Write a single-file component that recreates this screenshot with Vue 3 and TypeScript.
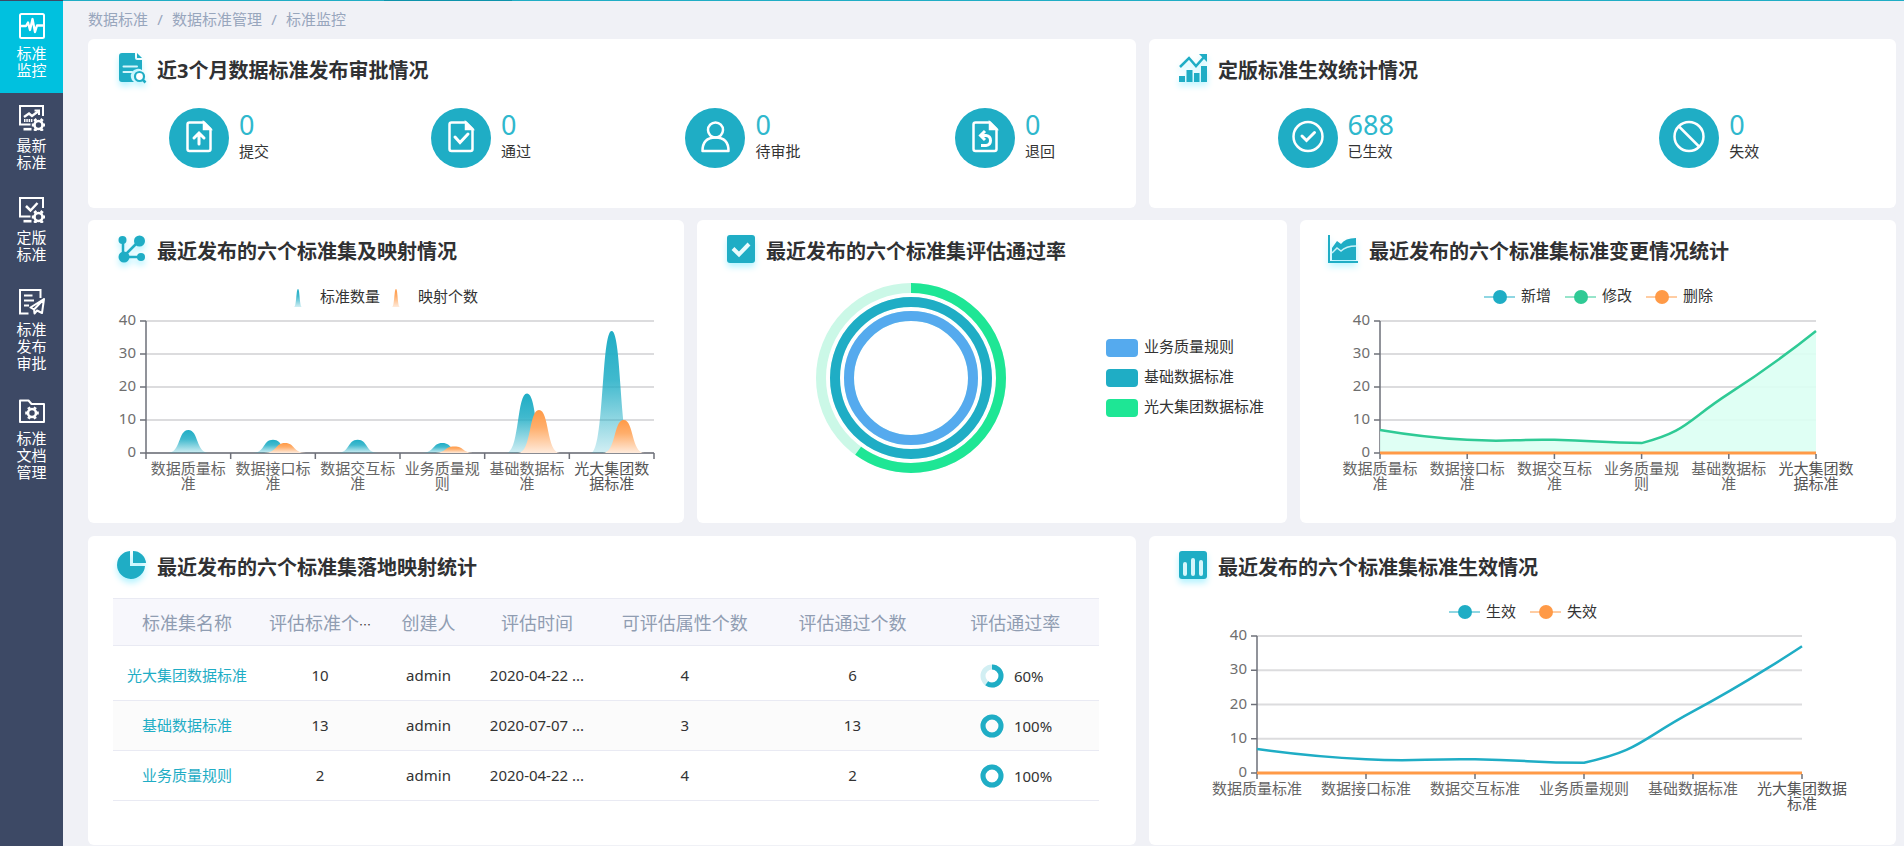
<script setup lang="ts">
interface MenuItem {
  icon: string
  lines: string[]
  active?: boolean
}
interface Stat {
  icon: string
  value: number
  label: string
}
interface Point {
  x: number
  y: number
}
interface Plot {
  left: number
  right: number
  top: number
  bottom: number
}

const TEAL = '#1fadc5'
const GREEN = '#2fca95'
const ORANGE = '#ff9a47'

const menu: MenuItem[] = [
  { icon: 'monitor', lines: ['标准', '监控'], active: true },
  { icon: 'latest', lines: ['最新', '标准'] },
  { icon: 'fixed', lines: ['定版', '标准'] },
  { icon: 'publish', lines: ['标准', '发布', '审批'] },
  { icon: 'docs', lines: ['标准', '文档', '管理'] },
]

const approvalStats: Stat[] = [
  { icon: 'submit', value: 0, label: '提交' },
  { icon: 'pass', value: 0, label: '通过' },
  { icon: 'pending', value: 0, label: '待审批' },
  { icon: 'reject', value: 0, label: '退回' },
]
const effectStats: Stat[] = [
  { icon: 'effective', value: 688, label: '已生效' },
  { icon: 'invalid', value: 0, label: '失效' },
]

const ticks = [0, 10, 20, 30, 40]
const counts = [7, 4, 4, 3, 18, 37]
const mappings = [0, 3, 0, 2, 13, 10]
const shortNames = [
  ['数据质量标', '准'],
  ['数据接口标', '准'],
  ['数据交互标', '准'],
  ['业务质量规', '则'],
  ['基础数据标', '准'],
  ['光大集团数', '据标准'],
]
const wideNames = [
  ['数据质量标准'],
  ['数据接口标准'],
  ['数据交互标准'],
  ['业务质量规则'],
  ['基础数据标准'],
  ['光大集团数据', '标准'],
]

const barPlot: Plot = { left: 58, right: 566, top: 57, bottom: 189 }
const changePlot: Plot = { left: 80, right: 516, top: 57, bottom: 189 }
const effectPlot: Plot = { left: 108, right: 653, top: 56, bottom: 193 }

function yOf(plot: Plot, value: number): number {
  return plot.bottom - ((plot.bottom - plot.top) * value) / 40
}
function lineX(plot: Plot, i: number): number {
  return plot.left + ((plot.right - plot.left) * i) / (counts.length - 1)
}
function bandX(i: number): number {
  return barPlot.left + ((barPlot.right - barPlot.left) * i) / counts.length
}
function bandCenter(i: number): number {
  return (bandX(i) + bandX(i + 1)) / 2
}

/** Bell-shaped bar standing on the axis. */
function bell(cx: number, base: number, top: number, half: number): string {
  const shoulder = half * 0.5
  const waist = half * 0.35
  return [
    `M${cx - half},${base}`,
    `C${cx - waist},${base} ${cx - shoulder},${top} ${cx},${top}`,
    `C${cx + shoulder},${top} ${cx + waist},${base} ${cx + half},${base}Z`,
  ].join(' ')
}
function bar(i: number, value: number, offset: number): string {
  return bell(bandCenter(i) + offset, barPlot.bottom, yOf(barPlot, value), 21)
}

/** Smooth curve whose control points stay inside the data's value range. */
function smoothPath(plot: Plot, values: number[]): string {
  const pts: Point[] = values.map((v, i) => ({ x: lineX(plot, i), y: yOf(plot, v) }))
  const minY = Math.min(...pts.map((p) => p.y))
  const maxY = Math.max(...pts.map((p) => p.y))
  const clamp = (y: number) => Math.max(minY, Math.min(maxY, y))
  let path = `M${pts[0].x},${pts[0].y}`
  let from: Point = pts[0]
  for (let i = 1; i < pts.length; i++) {
    const p = pts[i]
    const prev = pts[i - 1]
    const next = pts[i + 1]
    if (!next) {
      path += ` C${from.x},${from.y} ${p.x},${p.y} ${p.x},${p.y}`
      break
    }
    const lenPrev = Math.hypot(p.x - prev.x, p.y - prev.y)
    const lenNext = Math.hypot(next.x - p.x, next.y - p.y)
    const ratio = lenNext / (lenNext + lenPrev)
    const vx = next.x - prev.x
    const vy = next.y - prev.y
    const before: Point = { x: p.x - vx * 0.5 * (1 - ratio), y: clamp(p.y - vy * 0.5 * (1 - ratio)) }
    path += ` C${from.x},${from.y} ${before.x},${before.y} ${p.x},${p.y}`
    from = { x: p.x + vx * 0.5 * ratio, y: clamp(p.y + vy * 0.5 * ratio) }
  }
  return path
}
const changeLine = smoothPath(changePlot, counts)
const changeArea = `${changeLine} L${changePlot.right},${changePlot.bottom} L${changePlot.left},${changePlot.bottom}Z`
const effectLine = smoothPath(effectPlot, counts)

const rings = [
  { r: 62, color: '#55aaee', percent: 100, name: '业务质量规则' },
  { r: 76, color: TEAL, percent: 100, name: '基础数据标准' },
  { r: 90, color: '#1ee695', percent: 60, name: '光大集团数据标准' },
]

const columns = ['标准集名称', '评估标准个', '创建人', '评估时间', '可评估属性个数', '评估通过个数', '评估通过率']
const rows = [
  { name: '光大集团数据标准', total: 10, owner: 'admin', time: '2020-04-22 ...', attrs: 4, passed: 6, rate: 60 },
  { name: '基础数据标准', total: 13, owner: 'admin', time: '2020-07-07 ...', attrs: 3, passed: 13, rate: 100 },
  { name: '业务质量规则', total: 2, owner: 'admin', time: '2020-04-22 ...', attrs: 4, passed: 2, rate: 100 },
]
</script>

<template>
  <div class="app">
    <nav class="sidebar">
      <a v-for="item in menu" :key="item.icon" href="#" class="menu-item" :class="{ active: item.active }">
        <svg class="menu-icon" viewBox="0 0 26 26" fill="none" stroke="#fff" stroke-width="2">
          <template v-if="item.icon === 'monitor'">
            <rect x="1" y="1" width="24" height="24" rx="1.5" />
            <path d="M1 13H7L9 9.500L11 17L13.500 6L16 19L18 12.500H25" stroke-width="2.300" stroke-linejoin="round" />
          </template>
          <template v-else-if="item.icon === 'latest' || item.icon === 'fixed'">
            <path d="M24 11V1H1V19.500H11.500" />
            <path d="M4.500 24.200H12.500" stroke-width="2.600" />
            <template v-if="item.icon === 'latest'">
              <path d="M5 12L10 8.500L13 11L19 6.500" stroke-width="2.300" />
              <path d="M15.500 5.500H20V10" />
              <path d="M5 15.500H13.500" stroke-width="3" stroke-dasharray="1.500 .8" />
            </template>
            <path v-else d="M7 9L11.500 13.500L18.500 6" stroke-width="2.500" />
            <circle cx="19.500" cy="20" r="4" stroke-width="2.600" />
            <path
              d="M22 16L23.500 14M24 20H26.500M22 24L23.500 26M17 24L15.500 26M15 20H12.800M17 16L15.500 14"
              stroke-width="3"
            />
          </template>
          <template v-else-if="item.icon === 'publish'">
            <path d="M21.500 9V1H1V24.500H9.500" />
            <path d="M5 6.500H13.500M5 11.500H15M5 16.500H10" />
            <path
              d="M25 10L11.500 18.500L15 20.500L15.500 24.500L18 21.500L23 24L25 10L15 20.500"
              stroke-width="2"
              stroke-linejoin="round"
            />
          </template>
          <template v-else>
            <path d="M1 2.500H9.500L12.500 6H25V24H1Z" stroke-linejoin="round" />
            <circle cx="13" cy="15" r="4" stroke-width="2.600" />
            <path
              d="M15.500 11L16.500 9.300M17.500 15H19.800M15.500 19L16.500 20.700M10.500 19L9.500 20.700M8.500 15H6.200M10.500 11L9.500 9.300"
              stroke-width="3"
            />
          </template>
        </svg>
        <span v-for="line in item.lines" :key="line" class="menu-line">{{ line }}</span>
      </a>
    </nav>

    <div class="page">
      <div class="loading"><span class="loading-bar"></span></div>
      <main class="main">
        <nav class="breadcrumb" aria-label="位置">
          <a href="#">数据标准</a><span>/</span><a href="#">数据标准管理</a><span>/</span><a href="#">标准监控</a>
        </nav>

        <div class="row row-two first">
          <section class="card">
            <h2 class="title">
              <svg class="title-icon" viewBox="0 0 28 30">
                <path d="M4 0H17V5Q17 7 19 7H24V17A7 7 0 0 0 16 29H4Q1 29 1 26V3Q1 0 4 0Z" :fill="TEAL" />
                <path d="M19 0L24 5H19Z" :fill="TEAL" />
                <path d="M5.500 13.500H19M5.500 19H14" stroke="#d5f6fb" stroke-width="2" stroke-linecap="round" />
                <circle cx="21.500" cy="23.500" r="4.500" fill="#fff" :stroke="TEAL" stroke-width="2.200" />
                <path d="M24.500 26.500L27.500 29.500" :stroke="TEAL" stroke-width="2.500" />
              </svg>
              近3个月数据标准发布审批情况
            </h2>
            <div class="stats four">
              <div v-for="s in approvalStats" :key="s.label" class="stat">
                <svg class="stat-icon" viewBox="0 0 60 60" fill="none" stroke="#fff" stroke-width="2.500">
                  <circle cx="30" cy="30" r="30" :fill="TEAL" stroke="none" />
                  <template v-if="s.icon === 'pending'">
                    <circle cx="30.500" cy="22" r="7.500" />
                    <path d="M17.500 43Q17.500 29.500 30.500 29.500Q43.500 29.500 43.500 43Z" stroke-linejoin="round" />
                  </template>
                  <template v-else>
                    <path d="M35 14.500H20.500Q18.500 14.500 18.500 16.500V41Q18.500 43 20.500 43H39.500Q41.500 43 41.500 41V21L35 14.500Z" />
                    <path d="M35 15V21H41Z" fill="#fff" />
                    <path
                      v-if="s.icon === 'submit'"
                      d="M30 36V26M25 30L30 25L35 30"
                      stroke-width="3"
                      stroke-linecap="round"
                    />
                    <path v-else-if="s.icon === 'pass'" d="M24 29L29 34.500L37 26" stroke-width="3" stroke-linecap="round" />
                    <path
                      v-else
                      d="M30 23L25.500 27.500L30 32M26 27.500H31Q35.500 28 35.500 32.500Q35.500 37 31 37.500H26"
                      stroke-width="3"
                    />
                  </template>
                </svg>
                <div class="stat-text">
                  <span class="stat-value">{{ s.value }}</span>
                  <span class="stat-label">{{ s.label }}</span>
                </div>
              </div>
            </div>
          </section>

          <section class="card">
            <h2 class="title">
              <svg class="title-icon" viewBox="0 0 28 30" fill="none">
                <path d="M1 14L10 5L17 13L26 3" :stroke="TEAL" stroke-width="2.500" />
                <path d="M20 1H28V9Z" :fill="TEAL" />
                <path d="M0 23H6V29H0ZM7.500 17H13.500V29H7.500ZM15 20H20.500V29H15ZM22 13H28V29H22Z" :fill="TEAL" />
              </svg>
              定版标准生效统计情况
            </h2>
            <div class="stats two">
              <div v-for="s in effectStats" :key="s.label" class="stat">
                <svg class="stat-icon" viewBox="0 0 60 60" fill="none" stroke="#fff" stroke-width="2.500">
                  <circle cx="30" cy="30" r="30" :fill="TEAL" stroke="none" />
                  <circle cx="30" cy="28.500" r="14.500" />
                  <path v-if="s.icon === 'effective'" d="M24 28L28.500 32.500L36.500 24.500" stroke-width="3" stroke-linecap="round" />
                  <path v-else d="M20 18.500L40 38.500" />
                </svg>
                <div class="stat-text">
                  <span class="stat-value">{{ s.value }}</span>
                  <span class="stat-label">{{ s.label }}</span>
                </div>
              </div>
            </div>
          </section>
        </div>

        <div class="row row-three">
          <section class="card">
            <h2 class="title">
              <svg class="title-icon" viewBox="0 0 28 30" fill="none">
                <path d="M5 6V23H24M5 23L22 6" :stroke="TEAL" stroke-width="2.500" />
                <circle cx="4.500" cy="6" r="4" :fill="TEAL" />
                <circle cx="21.500" cy="7" r="5.500" :fill="TEAL" />
                <circle cx="6" cy="23" r="5.500" :fill="TEAL" />
                <circle cx="23" cy="23" r="4" :fill="TEAL" />
              </svg>
              最近发布的六个标准集及映射情况
            </h2>
            <svg class="chart" viewBox="0 0 596 259">
              <defs>
                <linearGradient id="tealFade" x1="0" y1="0" x2="0" y2="1">
                  <stop offset="0" :stop-color="TEAL" />
                  <stop offset="0.400" :stop-color="TEAL" stop-opacity="0.850" />
                  <stop offset="1" :stop-color="TEAL" stop-opacity="0.200" />
                </linearGradient>
                <linearGradient id="orangeFade" x1="0" y1="0" x2="0" y2="1">
                  <stop offset="0" :stop-color="ORANGE" />
                  <stop offset="0.400" stop-color="#ffae6b" />
                  <stop offset="1" stop-color="#ffebdc" />
                </linearGradient>
              </defs>
              <path :d="bell(210, 43, 25, 4)" fill="url(#tealFade)" />
              <text class="legend" x="232" y="38">标准数量</text>
              <path :d="bell(308, 43, 25, 4)" fill="url(#orangeFade)" />
              <text class="legend" x="330" y="38">映射个数</text>
              <g v-for="t in ticks" :key="t">
                <path class="grid" :d="`M${barPlot.left},${yOf(barPlot, t)}H${barPlot.right}`" />
                <path class="axis" :d="`M${barPlot.left - 6},${yOf(barPlot, t)}H${barPlot.left}`" />
                <text class="tick" :x="barPlot.left - 10" :y="yOf(barPlot, t) + 4">{{ t }}</text>
              </g>
              <path
                class="axis"
                :d="`M${barPlot.left},${barPlot.top}V${barPlot.bottom}H${barPlot.right}`"
              />
              <path v-for="i in 7" :key="i" class="axis" :d="`M${bandX(i - 1)},${barPlot.bottom}v6`" />
              <path v-for="(v, i) in counts" :key="`c${i}`" :d="bar(i, v, 0)" fill="url(#tealFade)" />
              <template v-for="(v, i) in mappings" :key="`m${i}`">
                <path v-if="v" :d="bar(i, v, 12)" fill="url(#orangeFade)" />
              </template>
              <g v-for="(n, i) in shortNames" :key="n[0]" class="name" :class="{ strong: i === 5 }">
                <text v-for="(line, k) in n" :key="k" :x="bandCenter(i)" :y="210 + 15 * k">{{ line }}</text>
              </g>
            </svg>
          </section>

          <section class="card">
            <h2 class="title">
              <svg class="title-icon" viewBox="0 0 28 30" fill="none">
                <rect x="0" y="1" width="28" height="28" rx="3" :fill="TEAL" />
                <path d="M6 14.500L12 20.500L22 10" stroke="#e9fbfd" stroke-width="4" />
              </svg>
              最近发布的六个标准集评估通过率
            </h2>
            <svg class="chart" viewBox="0 0 590 259">
              <g v-for="ring in rings" :key="ring.name" fill="none" stroke-width="10">
                <circle cx="214" cy="114" :r="ring.r" stroke="#cbf8e7" />
                <circle
                  cx="214"
                  cy="114"
                  :r="ring.r"
                  :stroke="ring.color"
                  pathLength="100"
                  :stroke-dasharray="`${ring.percent} ${100 - ring.percent}`"
                  transform="rotate(-90 214 114)"
                />
              </g>
              <g v-for="(ring, i) in rings" :key="ring.color">
                <rect x="409" :y="75 + 30 * i" width="32" height="18" rx="4" :fill="ring.color" />
                <text class="legend" x="447" :y="88 + 30 * i">{{ ring.name }}</text>
              </g>
            </svg>
          </section>

          <section class="card">
            <h2 class="title">
              <svg class="title-icon" viewBox="0 0 28 30" fill="none">
                <path d="M-1 1V28H28" :stroke="TEAL" stroke-width="2" />
                <path d="M2 14L7 7L11 10Q15 4 26 4V26H2Z" :fill="TEAL" />
                <path d="M2 19L7 14L11 17Q16 12 26 12" stroke="#c9f2f8" stroke-width="1.500" />
              </svg>
              最近发布的六个标准集标准变更情况统计
            </h2>
            <svg class="chart" viewBox="0 0 596 259">
              <g
                v-for="(l, i) in [
                  { name: '新增', color: TEAL },
                  { name: '修改', color: GREEN },
                  { name: '删除', color: ORANGE },
                ]"
                :key="l.name"
              >
                <path :d="`M${184 + 81 * i},33h31`" :stroke="l.color" stroke-width="1" />
                <circle :cx="200 + 81 * i" cy="33" r="7" :fill="l.color" />
                <text class="legend" :x="221 + 81 * i" y="37">{{ l.name }}</text>
              </g>
              <g v-for="t in ticks" :key="t">
                <path class="grid" :d="`M${changePlot.left},${yOf(changePlot, t)}H${changePlot.right}`" />
                <path class="axis" :d="`M${changePlot.left - 6},${yOf(changePlot, t)}H${changePlot.left}`" />
                <text class="tick" :x="changePlot.left - 10" :y="yOf(changePlot, t) + 4">{{ t }}</text>
              </g>
              <path
                class="axis"
                :d="`M${changePlot.left},${changePlot.top}V${changePlot.bottom}H${changePlot.right}`"
              />
              <path :d="changeArea" fill="#dbfff3" fill-opacity="0.900" />
              <path :d="changeLine" fill="none" :stroke="GREEN" stroke-width="2.500" />
              <path
                :d="`M${changePlot.left},${changePlot.bottom}H${changePlot.right}`"
                :stroke="ORANGE"
                stroke-width="3"
              />
              <g v-for="(n, i) in shortNames" :key="n[0]" class="name" :class="{ strong: i === 5 }">
                <path class="axis" :d="`M${lineX(changePlot, i)},${changePlot.bottom + 1}v5`" />
                <text v-for="(line, k) in n" :key="k" :x="lineX(changePlot, i)" :y="210 + 15 * k">{{ line }}</text>
              </g>
            </svg>
          </section>
        </div>

        <div class="row row-two">
          <section class="card">
            <h2 class="title">
              <svg class="title-icon" viewBox="0 0 28 30" fill="none">
                <path d="M12 1A14 14 0 1 0 27 16H12Z" :fill="TEAL" />
                <path d="M15 1V13H28A13 13 0 0 0 15 1Z" :fill="TEAL" />
              </svg>
              最近发布的六个标准集落地映射统计
            </h2>
            <div class="table-wrap">
              <table>
                <colgroup>
                  <col class="w15" /><col class="w12" /><col class="w10" /><col class="w12" /><col class="w18" /><col
                    class="w16"
                  /><col class="w17" />
                </colgroup>
                <thead>
                  <tr>
                    <th v-for="(c, i) in columns" :key="c" scope="col">{{ c }}<span v-if="i === 1" class="dots">⋯</span></th>
                  </tr>
                </thead>
                <tbody>
                  <tr v-for="r in rows" :key="r.name">
                    <td><a href="#">{{ r.name }}</a></td>
                    <td>{{ r.total }}</td>
                    <td>{{ r.owner }}</td>
                    <td>{{ r.time }}</td>
                    <td>{{ r.attrs }}</td>
                    <td>{{ r.passed }}</td>
                    <td>
                      <div class="rate">
                        <svg viewBox="0 0 24 24" fill="none" stroke-width="5">
                          <circle cx="12" cy="12" r="9" stroke="#d2eff3" />
                          <circle
                            cx="12"
                            cy="12"
                            r="9"
                            :stroke="TEAL"
                            pathLength="100"
                            :stroke-dasharray="`${r.rate} ${100 - r.rate}`"
                            transform="rotate(-90 12 12)"
                          />
                        </svg>
                        <span>{{ r.rate }}%</span>
                      </div>
                    </td>
                  </tr>
                </tbody>
              </table>
            </div>
          </section>

          <section class="card">
            <h2 class="title">
              <svg class="title-icon" viewBox="0 0 28 30" fill="none">
                <rect x="0" y="1" width="28" height="28" rx="3" :fill="TEAL" />
                <path d="M6 14V24M14 10V24M22 12V24" stroke="#d5f6fb" stroke-width="4" stroke-linecap="round" />
              </svg>
              最近发布的六个标准集标准生效情况
            </h2>
            <svg class="chart" viewBox="0 0 747 265">
              <g
                v-for="(l, i) in [
                  { name: '生效', color: TEAL },
                  { name: '失效', color: ORANGE },
                ]"
                :key="l.name"
              >
                <path :d="`M${300 + 81 * i},32h31`" :stroke="l.color" stroke-width="1" />
                <circle :cx="316 + 81 * i" cy="32" r="7" :fill="l.color" />
                <text class="legend" :x="337 + 81 * i" y="37">{{ l.name }}</text>
              </g>
              <g v-for="t in ticks" :key="t">
                <path class="grid" :d="`M${effectPlot.left},${yOf(effectPlot, t)}H${effectPlot.right}`" />
                <path class="axis" :d="`M${effectPlot.left - 6},${yOf(effectPlot, t)}H${effectPlot.left}`" />
                <text class="tick" :x="effectPlot.left - 10" :y="yOf(effectPlot, t) + 4">{{ t }}</text>
              </g>
              <path
                class="axis"
                :d="`M${effectPlot.left},${effectPlot.top}V${effectPlot.bottom}H${effectPlot.right}`"
              />
              <path :d="effectLine" fill="none" :stroke="TEAL" stroke-width="2.500" />
              <path
                :d="`M${effectPlot.left},${effectPlot.bottom}H${effectPlot.right}`"
                :stroke="ORANGE"
                stroke-width="3"
              />
              <g v-for="(n, i) in wideNames" :key="n[0]" class="name" :class="{ strong: i === 5 }">
                <path class="axis" :d="`M${lineX(effectPlot, i)},${effectPlot.bottom + 1}v5`" />
                <text v-for="(line, k) in n" :key="k" :x="lineX(effectPlot, i)" :y="214 + 15 * k">{{ line }}</text>
              </g>
            </svg>
          </section>
        </div>
      </main>
    </div>
  </div>
</template>

<style>
body {
  background: #f0f1f6;
}
</style>

<style scoped>
.app {
  display: flex;
  min-height: 100vh;
  font-family: 'Noto Sans', 'Noto Sans CJK SC', sans-serif;
  font-size: 15px;
  color: #333;
}
a {
  color: inherit;
  text-decoration: none;
}
.sidebar {
  flex: none;
  width: 63px;
  padding-top: 1px;
  background: #3d4965;
  color: #fff;
}
.menu-item {
  display: flex;
  flex-direction: column;
  align-items: center;
  padding: 12px 0 14px;
}
.menu-item.active {
  background: #00c1df;
}
.menu-icon {
  width: 26px;
  height: 26px;
  margin-bottom: 6px;
}
.menu-line {
  line-height: 17px;
}
.page {
  flex: 1;
  min-width: 0;
}
.loading {
  height: 1px;
  background: #1fadc5;
}
.loading-bar {
  display: block;
  width: 128px;
  height: 1px;
  margin-left: 321px;
  background: #0d93ab;
}
.main {
  padding: 0 8px 0 25px;
}
.breadcrumb {
  display: flex;
  padding-bottom: 2px;
  line-height: 36px;
  color: #98a6bd;
}
.breadcrumb span {
  width: 24px;
  text-align: center;
}
.row {
  display: grid;
  gap: 13px;
  margin-bottom: 13px;
}
.row.first {
  margin-bottom: 12px;
}
.row:last-child {
  margin-bottom: 0;
}
.row-two {
  grid-template-columns: 1048fr 747fr;
}
.row-three {
  grid-template-columns: 596fr 590fr 596fr;
}
.card {
  min-width: 0;
  border-radius: 6px;
  background: #fff;
}
.title {
  display: flex;
  align-items: flex-end;
  gap: 11px;
  margin: 0;
  padding: 14px 30px 0;
  font-size: 20px;
  line-height: 24px;
  color: #303133;
}
.title-icon {
  width: 28px;
  height: 30px;
  overflow: visible;
  filter: drop-shadow(0 4px 3px #b5f3ff);
}
.stats {
  display: grid;
  justify-items: center;
  padding: 25px 0 40px;
}
.four {
  grid-template-columns: repeat(4, 1fr);
}
.two {
  grid-template-columns: repeat(2, 1fr);
}
.stat {
  display: flex;
  align-items: center;
  gap: 10px;
}
.stat-icon {
  width: 60px;
  height: 60px;
}
.stat-text {
  display: flex;
  flex-direction: column;
  padding-bottom: 4px;
}
.stat-value {
  font-size: 27px;
  line-height: 30px;
  color: #2fb8cd;
}
.stat-label {
  line-height: 22px;
}
.chart {
  display: block;
  width: 100%;
}
.legend {
  font-size: 15px;
  fill: #333;
}
.grid {
  stroke: #dcdcde;
  stroke-width: 2;
}
.axis {
  fill: none;
  stroke: #6e7079;
  stroke-width: 1.5;
}
.tick {
  font-size: 15px;
  text-anchor: end;
  fill: #6e6e6e;
}
.name text {
  font-size: 15px;
  text-anchor: middle;
  fill: #666;
}
.strong text {
  fill: #555;
}
.table-wrap {
  padding: 18px 37px 44px 25px;
}
table {
  width: 100%;
  border-collapse: collapse;
  table-layout: fixed;
  text-align: center;
}
.w10 {
  width: 10%;
}
.w12 {
  width: 12%;
}
.w15 {
  width: 15%;
}
.w16 {
  width: 16%;
}
.w17 {
  width: 17%;
}
.w18 {
  width: 18%;
}
th {
  height: 46px;
  padding: 0;
  border-top: 1px solid #e9eaf3;
  border-bottom: 1px solid #e9eaf3;
  background: #f7f7fc;
  font-size: 18px;
  font-weight: 400;
  color: #909db2;
  white-space: nowrap;
}
.dots {
  font-size: 12px;
  color: #333;
}
td {
  height: 47px;
  padding: 0 0 2px;
  border-bottom: 1px solid #e9eaf3;
  white-space: nowrap;
}
tbody tr:first-child td {
  padding-top: 5px;
}
tbody tr:nth-child(2) {
  background: #fbfbfb;
}
td a {
  color: #1fadc5;
}
.rate {
  display: flex;
  align-items: center;
  gap: 10px;
  padding-top: 2px;
  padding-left: 29%;
}
.rate svg {
  width: 24px;
  height: 24px;
}
</style>
